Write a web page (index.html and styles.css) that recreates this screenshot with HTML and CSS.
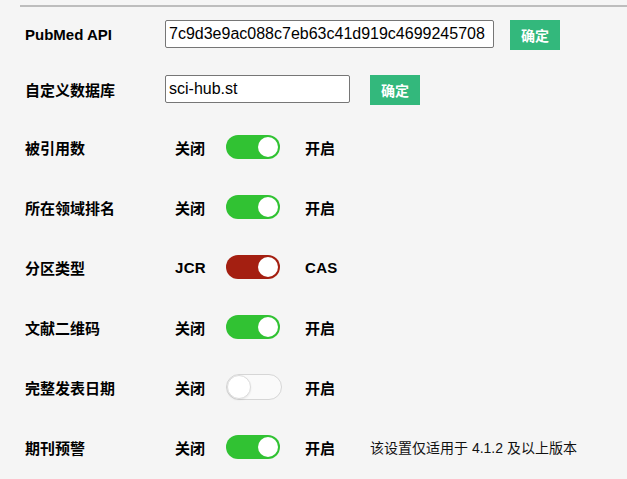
FILE: index.html
```html
<!DOCTYPE html>
<html lang="zh">
<head>
<meta charset="utf-8">
<title>设置</title>
<link rel="stylesheet" href="styles.css">
</head>
<body>
<div class="panel">
  <div class="row row-first">
    <div class="label">PubMed API</div>
    <div class="control">
      <input class="text-input wide" type="text" value="7c9d3e9ac088c7eb63c41d919c4699245708">
      <button class="btn">确定</button>
    </div>
  </div>
  <div class="row row-second">
    <div class="label">自定义数据库</div>
    <div class="control">
      <input class="text-input narrow" type="text" value="sci-hub.st">
      <button class="btn">确定</button>
    </div>
  </div>
  <div class="row">
    <div class="label">被引用数</div>
    <div class="control toggle-row">
      <span class="opt">关闭</span>
      <span class="switch on"><span class="knob"></span></span>
      <span class="opt opt-right">开启</span>
    </div>
  </div>
  <div class="row">
    <div class="label">所在领域排名</div>
    <div class="control toggle-row">
      <span class="opt">关闭</span>
      <span class="switch on"><span class="knob"></span></span>
      <span class="opt opt-right">开启</span>
    </div>
  </div>
  <div class="row">
    <div class="label">分区类型</div>
    <div class="control toggle-row">
      <span class="opt latin">JCR</span>
      <span class="switch on red"><span class="knob"></span></span>
      <span class="opt opt-right latin">CAS</span>
    </div>
  </div>
  <div class="row">
    <div class="label">文献二维码</div>
    <div class="control toggle-row">
      <span class="opt">关闭</span>
      <span class="switch on"><span class="knob"></span></span>
      <span class="opt opt-right">开启</span>
    </div>
  </div>
  <div class="row">
    <div class="label">完整发表日期</div>
    <div class="control toggle-row">
      <span class="opt">关闭</span>
      <span class="switch off"><span class="knob"></span></span>
      <span class="opt opt-right">开启</span>
    </div>
  </div>
  <div class="row">
    <div class="label">期刊预警</div>
    <div class="control toggle-row">
      <span class="opt">关闭</span>
      <span class="switch on"><span class="knob"></span></span>
      <span class="opt opt-right">开启</span>
      <span class="note">该设置仅适用于 4.1.2 及以上版本</span>
    </div>
  </div>
</div>
</body>
</html>
```

FILE: styles.css
```css
html, body {
  margin: 0;
  padding: 0;
  background: #f5f5f5;
}
body {
  font-family: "Liberation Sans", Arial, "Noto Sans CJK SC", sans-serif;
  color: #000;
  padding-top: 5px;
}
.panel {
  margin-left: 20px;
  border-top: 2px solid #bdbdbd;
}
.row {
  display: flex;
  align-items: center;
  height: 60px;
}
.row-first {
  height: 54px;
}
.row-second {
  height: 56px;
}
.label {
  width: 140px;
  padding-left: 5px;
  font-size: 15px;
  font-weight: bold;
  flex: none;
}
.control {
  display: flex;
  align-items: center;
}
.text-input {
  box-sizing: border-box;
  height: 28px;
  border: 1px solid #767676;
  border-radius: 2px;
  padding: 0 3px;
  background: #fff;
  font-family: "Liberation Sans", Arial, sans-serif;
  font-size: 16px;
  color: #000;
  margin: 0;
  outline: none;
}
.text-input.wide {
  width: 329px;
}
.text-input.narrow {
  width: 185px;
}
.btn {
  box-sizing: border-box;
  width: 50px;
  height: 30px;
  margin: 0 0 0 16px;
  padding: 0;
  border: none;
  border-radius: 0;
  background: #33b87c;
  color: #fff;
  font-family: "Liberation Sans", "Noto Sans CJK SC", sans-serif;
  font-size: 14px;
  font-weight: bold;
  position: relative;
  top: 1px;
}
.row-second .btn {
  margin-left: 20px;
}
.toggle-row {
  padding-left: 10px;
}
.opt {
  width: 51px;
  font-size: 15px;
  font-weight: bold;
  flex: none;
}
.opt.latin {
  letter-spacing: 0.3px;
}
.opt-right {
  width: 65px;
  margin-left: 25px;
}
.switch {
  box-sizing: border-box;
  position: relative;
  flex: none;
  width: 54px;
  height: 24px;
  border-radius: 12px;
  display: block;
}
.switch.on {
  background: #31c233;
}
.switch.on.red {
  background: #a41f11;
}
.switch.on .knob {
  position: absolute;
  top: 2px;
  right: 2px;
  width: 20px;
  height: 20px;
  border-radius: 50%;
  background: #fff;
}
.switch.off {
  width: 56px;
  height: 26px;
  margin-right: -2px;
  border-radius: 13px;
  border: 1px solid #d6d6d6;
  background: #fafafa;
}
.switch.off .knob {
  box-sizing: border-box;
  position: absolute;
  top: 0;
  left: 0;
  width: 24px;
  height: 24px;
  border-radius: 50%;
  background: #fff;
  border: 1px solid #dcdcdc;
  box-shadow: 0 1px 2px rgba(0, 0, 0, 0.08);
}
.note {
  font-size: 14px;
  color: #111;
}
```
